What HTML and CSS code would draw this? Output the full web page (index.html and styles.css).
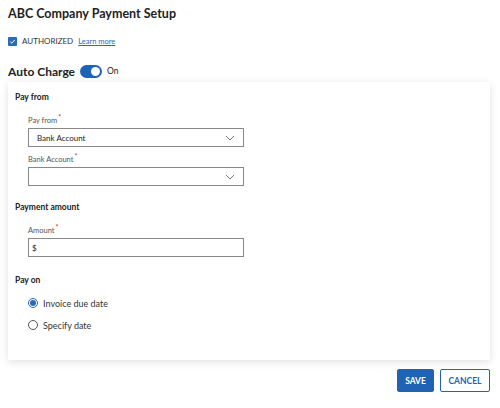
FILE: index.html
```html
<!DOCTYPE html>
<html>
<head>
<meta charset="utf-8">
<link rel="stylesheet" href="styles.css">
</head>
<body>
<div class="page">
  <h1 class="title">ABC Company Payment Setup</h1>
  <div class="auth">
    <span class="checkbox"><svg width="9" height="9" viewBox="0 0 9 9"><rect width="9" height="9" rx="1" fill="#2a6ab8"/><path d="M2.3 4.7 L3.8 6.1 L6.8 2.9" stroke="#fff" stroke-width="1" fill="none"/></svg></span>
    <span class="auth-text">AUTHORIZED</span>
    <a class="learn" href="#">Learn more</a>
  </div>
  <div class="auto">
    <span class="auto-title">Auto Charge</span>
    <span class="toggle"><span class="knob"></span></span>
    <span class="on">On</span>
  </div>
  <div class="card">
    <div class="section-title">Pay from</div>
    <div class="field">
      <div class="label">Pay from<span class="req">*</span></div>
      <div class="select"><span>Bank Account</span><svg class="chev" width="10" height="6" viewBox="0 0 10 6"><path d="M1 1 L5 5 L9 1" stroke="#666" stroke-width="0.9" fill="none"/></svg></div>
    </div>
    <div class="field">
      <div class="label">Bank Account<span class="req">*</span></div>
      <div class="select"><span></span><svg class="chev" width="10" height="6" viewBox="0 0 10 6"><path d="M1 1 L5 5 L9 1" stroke="#666" stroke-width="0.9" fill="none"/></svg></div>
    </div>
    <div class="section-title sec2">Payment amount</div>
    <div class="field">
      <div class="label">Amount<span class="req">*</span></div>
      <div class="input">$</div>
    </div>
    <div class="section-title sec3">Pay on</div>
    <div class="radios">
      <div class="radio-row"><span class="radio checked"><span class="dot"></span></span>Invoice due date</div>
      <div class="radio-row"><span class="radio"></span>Specify date</div>
    </div>
  </div>
  <div class="actions">
    <button class="btn save">SAVE</button>
    <button class="btn cancel">CANCEL</button>
  </div>
</div>
</body>
</html>
```
FILE: styles.css
```css
html, body { margin: 0; padding: 0; background: #fff; }
body { font-family: Lato, "Open Sans", sans-serif; color: #222; }
.page { padding: 6px 10px 0 8px; width: 482px; }
.title { font-size: 12.5px; font-weight: 700; margin: 0; line-height: 16px; color: #222; }
.auth { display: flex; align-items: center; margin-top: 13px; height: 12px; }
.checkbox { display: inline-flex; width: 9px; height: 9px; }
.auth-text { font-size: 8px; margin-left: 5px; color: #333; }
.learn { font-size: 7.5px; margin-left: 5px; color: #2a6ab8; text-decoration: underline; }
.auto { display: flex; align-items: center; margin-top: 16px; height: 16px; }
.auto-title { font-size: 12px; font-weight: 700; color: #222; }
.toggle { width: 22px; height: 13px; border-radius: 6.5px; background: #1f63b5; margin-left: 5px; position: relative; display: inline-block; }
.knob { position: absolute; right: 2px; top: 2px; width: 9px; height: 9px; border-radius: 50%; background: #fff; }
.on { font-size: 8.5px; margin-left: 5px; color: #222; }
.card { margin-top: 3px; background: #fff; box-shadow: 0 2px 8px rgba(0,0,0,0.12); padding: 9px 7px 28px 7px; height: 241px; }
.section-title { font-size: 8.5px; font-weight: 700; color: #222; line-height: 12px; }
.sec2 { margin-top: 15px; }
.sec3 { margin-top: 17px; }
.field { margin-left: 13px; width: 216px; }
.section-title + .field { margin-top: 13px; }
.field + .field { margin-top: 8px; }
.label { font-size: 7.5px; color: #555; line-height: 10px; height: 10px; }
.req { color: #d0282e; font-size: 7px; line-height: 0; vertical-align: 3px; margin-left: 1px; }
.select, .input { box-sizing: border-box; height: 19px; border: 1px solid #888; margin-top: 2px; display: flex; align-items: center; justify-content: space-between; padding: 0 8px 0 8px; font-size: 8px; color: #222; }
.input { padding-left: 3px; }
.chev { display: block; }
.radios { margin-left: 13px; margin-top: 11px; }
.radio-row { display: flex; align-items: center; font-size: 9px; color: #333; height: 12px; margin-bottom: 10px; }
.radio { box-sizing: border-box; width: 10px; height: 10px; border-radius: 50%; border: 1px solid #555; margin-right: 5px; display: inline-flex; align-items: center; justify-content: center; }
.radio.checked { border-color: #2a6ab8; }
.dot { width: 6px; height: 6px; border-radius: 50%; background: #2a6ab8; }
.actions { display: flex; justify-content: flex-end; gap: 6px; margin-top: 9px; }
.btn { font-family: Lato, sans-serif; font-weight: 700; font-size: 8.5px; height: 23px; border-radius: 2px; padding: 0; }
.save { width: 37px; background: #2163b3; color: #fff; border: 1px solid #2163b3; }
.cancel { width: 50px; background: #fff; color: #2163b3; border: 1px solid #2163b3; }
```
